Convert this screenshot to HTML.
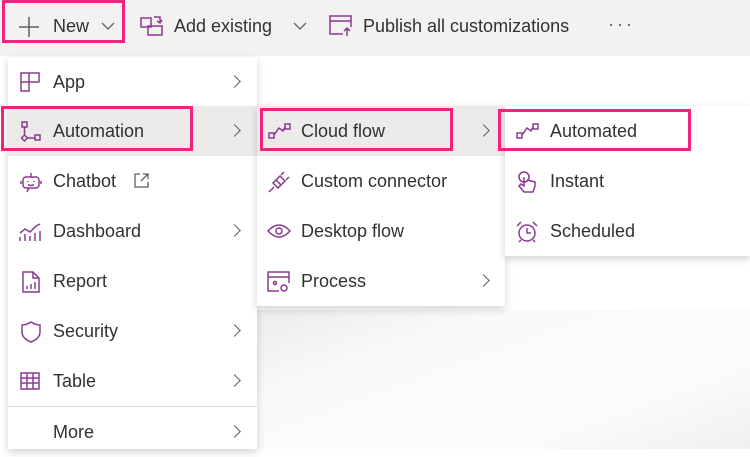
<!DOCTYPE html>
<html><head><meta charset="utf-8"><style>
*{box-sizing:border-box;margin:0;padding:0}
body{width:750px;height:449px;overflow:hidden;position:relative;background:#fff;font-family:"Liberation Sans",sans-serif;color:#323130}
.tb{position:absolute;left:0;top:0;width:750px;height:56px;background:#f3f2f1}
.tb span{position:absolute;top:16px;font-size:18px;color:#323130}
.bg2{position:absolute;left:257px;top:310px;width:493px;height:139px;background:linear-gradient(160deg,#ececec 0%,#fafafa 30%,#fcfcfc 70%,#f0f0f0 100%)}
.menu{position:absolute;background:#fff;box-shadow:0 3px 8px rgba(0,0,0,.18)}
.it{position:absolute;left:0;width:100%;height:50px;font-size:18px}
.it .t{position:absolute;top:15px}
.it svg{position:absolute;top:15px}
.chev{position:absolute;top:20px;width:9px;height:9px;border-right:1.5px solid #605e5c;border-top:1.5px solid #605e5c;transform:rotate(45deg)}
.sel{background:#edebe9}
.box{position:absolute;border:3px solid #f2237d}
</style></head><body>
<div class="tb">
<svg style="position:absolute;left:18px;top:16px" width="22" height="22" viewBox="0 0 22 22"><path d="M11 1v20M1 11h20" stroke="#605e5c" stroke-width="1.5"/></svg>
<span style="left:53px">New</span>
<svg style="position:absolute;left:101px;top:22px" width="14" height="9"><path d="M1 1l6 6 6-6" stroke="#605e5c" fill="none" stroke-width="1.3"/></svg>
<svg style="position:absolute;left:140px;top:15px" width="24" height="22" viewBox="0 0 24 22" fill="none" stroke="#8a3b8f" stroke-width="1.5"><rect x="1" y="3" width="10" height="9"/><rect x="8" y="11" width="14" height="9"/><path d="M14 2h6v6M17 6l3 2 2-3"/></svg>
<span style="left:174px">Add existing</span>
<svg style="position:absolute;left:293px;top:22px" width="14" height="9"><path d="M1 1l6 6 6-6" stroke="#605e5c" fill="none" stroke-width="1.3"/></svg>
<svg style="position:absolute;left:329px;top:15px" width="24" height="22" viewBox="0 0 24 22" fill="none" stroke="#8a3b8f" stroke-width="1.5"><path d="M14 19H1V1h21v11M1 6h21M18 21v-7M15 16l3-3 3 3"/></svg>
<span style="left:363px">Publish all customizations</span>
<span style="left:608px;top:14px;letter-spacing:3px;color:#605e5c">···</span>
</div>
<div class="bg2"></div>

<div class="menu" style="left:8px;top:57px;width:249px;height:392px">
<div class="it" style="top:0"><svg style="left:12px" width="20" height="20" viewBox="0 0 20 20" fill="none" stroke="#8a3b8f" stroke-width="1.5"><path d="M1 1h18v9H1zM9 1v18H1V10"/></svg><span class="t" style="left:45px">App</span><div class="chev" style="left:222px"></div></div>
<div class="it sel" style="top:49px"><svg style="left:12px" width="22" height="22" viewBox="0 0 22 22" fill="none" stroke="#8a3b8f" stroke-width="1.5"><rect x="2" y="1" width="5" height="5"/><path d="M4.5 6v8M4.5 14l3 3-3 3-3-3zM8 17h7"/><rect x="15" y="14" width="5" height="5"/></svg><span class="t" style="left:45px">Automation</span><div class="chev" style="left:222px"></div></div>
<div class="it" style="top:99px"><svg style="left:12px" width="22" height="22" viewBox="0 0 22 22" fill="none" stroke="#8a3b8f" stroke-width="1.5"><rect x="3" y="6" width="16" height="11" rx="3"/><path d="M11 2v4M8 10v1M14 10v1M8 13.5q3 2 6 0M1 10v3M21 10v3M9 17l-2 4"/></svg><span class="t" style="left:45px">Chatbot</span><svg style="left:126px;top:17px" width="15" height="15" viewBox="0 0 15 15" fill="none" stroke="#605e5c" stroke-width="1.3"><path d="M6 1H1v13h13V9M9 1h5v5M14 1L7 8"/></svg></div>
<div class="it" style="top:149px"><svg style="left:10px" width="24" height="22" viewBox="0 0 24 22" fill="none" stroke="#8a3b8f" stroke-width="1.5"><path d="M2 20v-4M7 20v-7M12 20v-5M17 20v-8M22 20v-10M2 12l5-4 5 3 6-6 4-2"/></svg><span class="t" style="left:45px">Dashboard</span><div class="chev" style="left:222px"></div></div>
<div class="it" style="top:199px"><svg style="left:14px" width="18" height="22" viewBox="0 0 18 22" fill="none" stroke="#8a3b8f" stroke-width="1.5"><path d="M1 1h10l6 6v14H1zM11 1v6h6M5 18v-3M9 18v-5M13 18v-7"/></svg><span class="t" style="left:45px">Report</span></div>
<div class="it" style="top:249px"><svg style="left:12px" width="22" height="22" viewBox="0 0 22 22" fill="none" stroke="#8a3b8f" stroke-width="1.5"><path d="M11 1c3 2 6 3 9 3v7c0 5-4 8-9 10-5-2-9-5-9-10V4c3 0 6-1 9-3z"/></svg><span class="t" style="left:45px">Security</span><div class="chev" style="left:222px"></div></div>
<div class="it" style="top:299px"><svg style="left:12px" width="20" height="20" viewBox="0 0 20 20" fill="none" stroke="#8a3b8f" stroke-width="1.5"><path d="M1 2h18v16H1zM1 7h18M1 12h18M7 2v16M13 2v16"/></svg><span class="t" style="left:45px">Table</span><div class="chev" style="left:222px"></div></div>
<div style="position:absolute;left:0;top:349px;width:100%;height:1px;background:#e1dfdd"></div>
<div class="it" style="top:350px"><span class="t" style="left:45px">More</span><div class="chev" style="left:222px"></div></div>
</div>

<div class="menu" style="left:257px;top:106px;width:248px;height:200px">
<div class="it sel" style="top:0"><svg style="left:11px;top:16px" width="24" height="18" viewBox="0 0 24 18" fill="none" stroke="#8a3b8f" stroke-width="1.5"><rect x="1" y="11" width="5" height="5"/><rect x="17" y="2" width="5" height="5"/><path d="M6 13l5-7 4 3 2-4"/></svg><span class="t" style="left:44px">Cloud flow</span><div class="chev" style="left:222px"></div></div>
<div class="it" style="top:50px"><svg style="left:11px" width="22" height="22" viewBox="0 0 22 22" fill="none" stroke="#8a3b8f" stroke-width="1.5"><path d="M1 21l5-5M16 1l-3 3M21 6l-3 3M8 9l5 5M5 12l7-7 5 5-7 7z"/></svg><span class="t" style="left:44px">Custom connector</span></div>
<div class="it" style="top:100px"><svg style="left:10px;top:18px" width="24" height="14" viewBox="0 0 24 14" fill="none" stroke="#8a3b8f" stroke-width="1.5"><path d="M1 7q11-12 22 0q-11 12-22 0z"/><circle cx="12" cy="7" r="3"/></svg><span class="t" style="left:44px">Desktop flow</span></div>
<div class="it" style="top:150px"><svg style="left:10px" width="24" height="22" viewBox="0 0 24 22" fill="none" stroke="#8a3b8f" stroke-width="1.5"><path d="M12 20H1V1h21v11M1 6h21"/><circle cx="8" cy="12" r="1.5"/><circle cx="17" cy="17" r="3"/></svg><span class="t" style="left:44px">Process</span><div class="chev" style="left:222px"></div></div>
</div>

<div class="menu" style="left:505px;top:106px;width:245px;height:150px">
<div class="it" style="top:0"><svg style="left:11px;top:16px" width="24" height="18" viewBox="0 0 24 18" fill="none" stroke="#8a3b8f" stroke-width="1.5"><rect x="1" y="11" width="5" height="5"/><rect x="17" y="2" width="5" height="5"/><path d="M6 13l5-7 4 3 2-4"/></svg><span class="t" style="left:45px">Automated</span></div>
<div class="it" style="top:50px"><svg style="left:12px" width="20" height="22" viewBox="0 0 20 22" fill="none" stroke="#8a3b8f" stroke-width="1.5"><circle cx="7" cy="6" r="5"/><path d="M7 6v9l-3-2-2 2 5 6h9l2-6v-4l-8-2"/></svg><span class="t" style="left:45px">Instant</span></div>
<div class="it" style="top:100px"><svg style="left:11px" width="22" height="22" viewBox="0 0 22 22" fill="none" stroke="#8a3b8f" stroke-width="1.5"><circle cx="11" cy="12" r="8"/><path d="M11 7v5h4M1 5l4-4M21 5l-4-4M5 19l-2 2M17 19l2 2"/></svg><span class="t" style="left:45px">Scheduled</span></div>
</div>

<div class="box" style="left:2px;top:0;width:123px;height:43px"></div>
<div class="box" style="left:1px;top:106px;width:192px;height:45px"></div>
<div class="box" style="left:260px;top:108px;width:193px;height:43px"></div>
<div class="box" style="left:498px;top:109px;width:193px;height:42px"></div>
</body></html>
